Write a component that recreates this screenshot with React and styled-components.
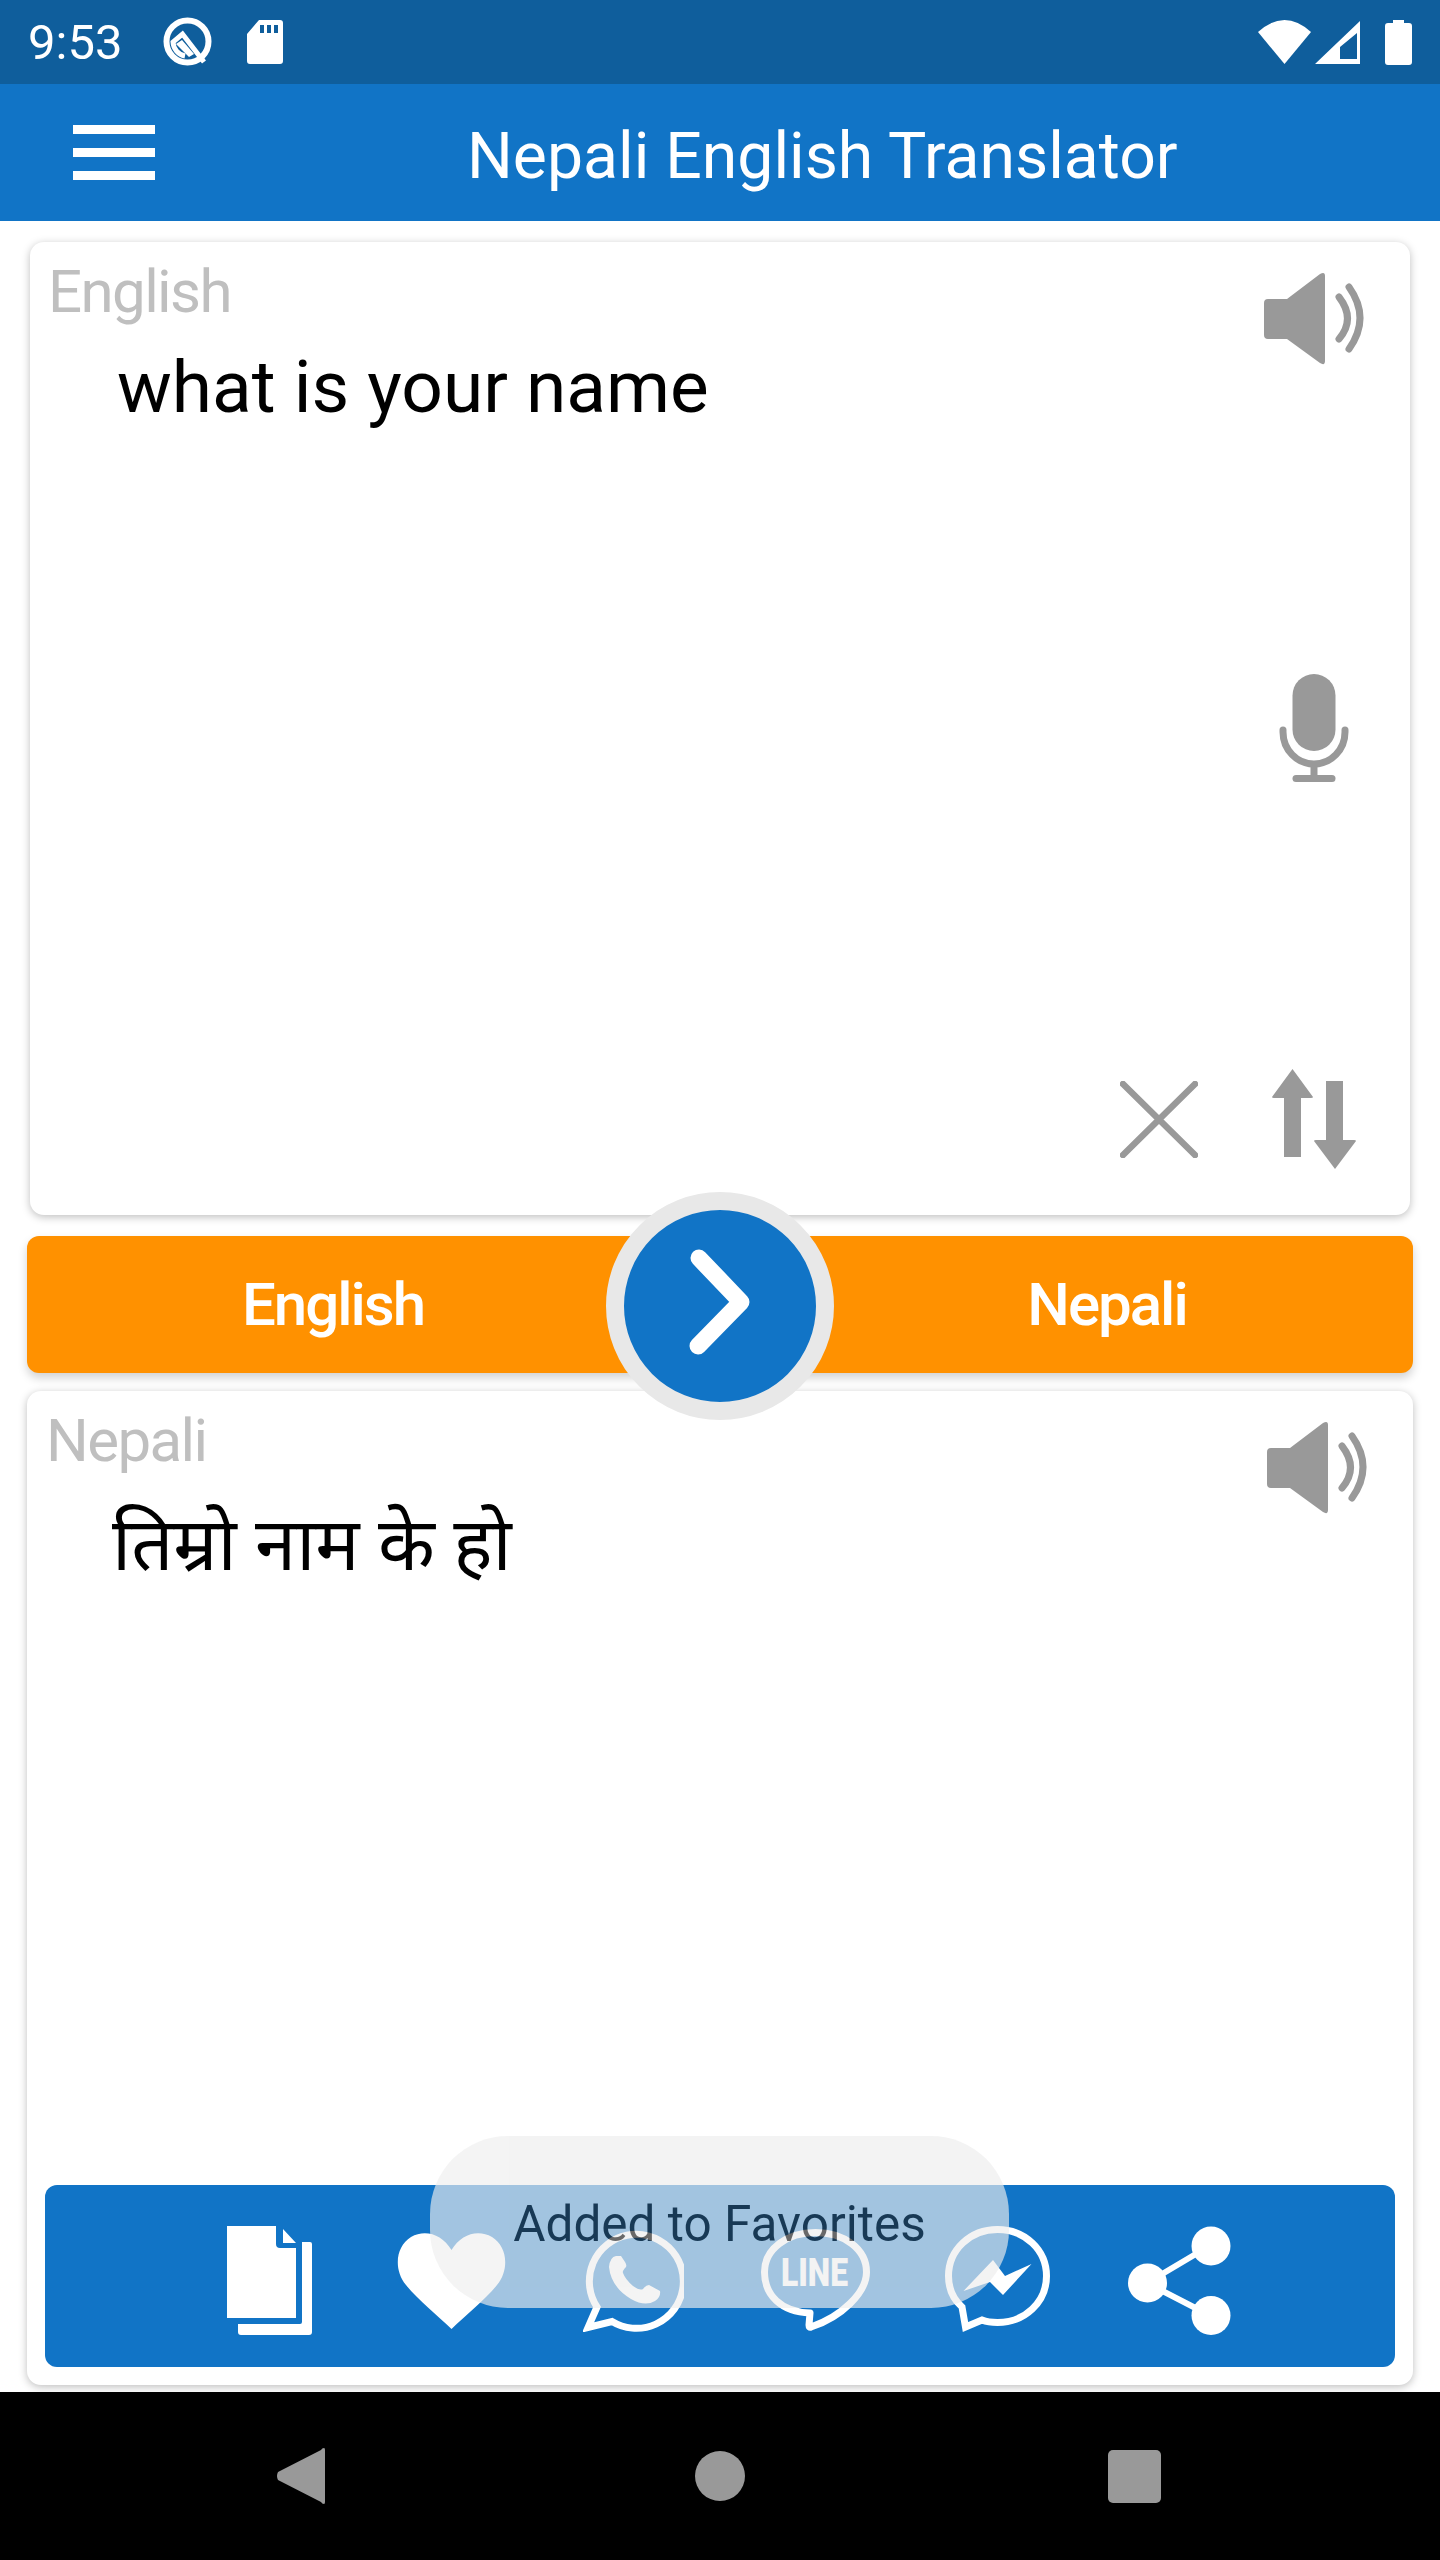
import React from "react";
import styled, { createGlobalStyle } from "styled-components";

const Global = createGlobalStyle`
  html, body { margin: 0; padding: 0; background: #fff; }
  * { box-sizing: border-box; }
`;
const Phone = styled.div`
  width: 1440px; height: 2560px; display: flex; flex-direction: column; overflow: hidden; position: relative;
  font-family: Roboto, "Noto Sans", sans-serif; background: #fff;
`;
const StatusBar = styled.div`
  height: 84px; flex: none; background: #0f5e9c; color: #fff; display: flex; align-items: center;
  padding: 0 28px 0 28px; position: relative;
`;
const Time = styled.span`font-size: 49px; line-height: 84px; width: 135px; padding-top: 2px;`;
const StatusRight = styled.div`margin-left: auto; display: flex; align-items: center;`;
const AppBar = styled.header`
  height: 137px; flex: none; background: #1174c6; display: flex; align-items: center; color: #fff;
`;
const Burger = styled.div`
  width: 82px; height: 55px; margin-left: 73px; display: flex; flex-direction: column; justify-content: space-between;
  i { display: block; height: 9px; background: #fff; }
`;
const Title = styled.h1`
  margin: 0 0 0 312px; padding-top: 8px; font-size: 64.3px; font-weight: 400; white-space: nowrap; line-height: 137px;
`;
const Main = styled.main`flex: 1; min-height: 0; display: flex; flex-direction: column; position: relative;`;
const Card = styled.section`
  background: #fff; border-radius: 14px; box-shadow: 0 2px 9px rgba(0,0,0,.26);
  margin: ${p => p.$margin}; height: ${p => p.$height}px; display: flex; position: relative; z-index: ${p => p.$z || 1};
`;
const TextColumn = styled.div`flex: 1; min-width: 0; padding: ${p => p.$pad};`;
const Label = styled.div`
  font-size: 60px; line-height: 64px; color: #bfbfbf; font-weight: 400; letter-spacing: -1.6px;
`;
const Phrase = styled.div`
  color: #000; font-size: ${p => p.$size}px; line-height: 90px; margin: ${p => p.$margin};
  font-family: Roboto, "Noto Sans Devanagari", "Noto Sans", sans-serif;
`;
const ToolColumn = styled.div`width: 300px; display: flex; flex-direction: column; padding-top: ${p => p.$top}px;`;
const ToolRow = styled.div`
  display: flex; justify-content: flex-end; align-items: center; margin-top: ${p => p.$top || 0}px; padding-right: ${p => p.$right}px;
  gap: ${p => p.$gap || 0}px;
`;
const Svg = styled.svg`display: block; flex: none;`;
const LangBar = styled.div`
  margin: 21px 27px 18px; height: 137px; border-radius: 12px; background: #ff9100; position: relative; z-index: 3;
  box-shadow: 0 5px 10px rgba(0,0,0,.18);
  display: grid; grid-template-columns: 1fr 1fr; column-gap: 162px; align-items: center; text-align: center;
`;
const LangName = styled.div`
  color: #fff; font-size: 60px; font-weight: 500; letter-spacing: -2px; line-height: 137px;
`;
const GoButton = styled.div`
  position: absolute; left: 50%; top: -44px; margin-left: -114px; width: 228px; height: 228px; border-radius: 50%;
  background: #1174c6; border: 18px solid #e8e8e8;
`;
const ActionBar = styled.div`
  position: absolute; left: 18px; right: 18px; bottom: 18px; height: 182px; border-radius: 12px; background: #1174c6;
  display: flex; align-items: center; justify-content: center; padding: 8px 0 0 8px;
`;
const Action = styled.div`width: 182px; display: flex; justify-content: center;`;
const Toast = styled.div`
  position: absolute; left: 430px; top: 2136px; width: 579px; height: 172px; border-radius: 78px; background: #eee; opacity: .66;
  z-index: 6; color: #1c1c1c; font-size: 49.5px; text-align: center; line-height: 56px; padding-top: 60px;
`;
const NavBar = styled.nav`
  height: 168px; flex: none; background: #000; position: relative; z-index: 5;
`;
const NavIcons = styled.div`
  display: flex; align-items: center; height: 100%; padding: 0 0 0 276px;
`;

const Speaker = () => (
  <Svg width="100" height="94" viewBox="0 0 100 94" fill="#999">
    <path d="M4 27H23L56 2Q61-1 61 4V89Q61 94 56 91L23 67H4Q0 67 0 63V31Q0 27 4 27Z" />
    <path d="M75 25Q92 47 75 67M85 15Q107 46 85 77" fill="none" stroke="#999" strokeWidth="7" strokeLinecap="round" />
  </Svg>
);
const Mic = () => (
  <Svg width="70" height="108" viewBox="0 0 70 108" fill="#999">
    <rect x="13.500" width="43" height="77" rx="21.500" />
    <path d="M4 56V58A31 32 0 0 0 66 58V56" fill="none" stroke="#999" strokeWidth="7" strokeLinecap="round" />
    <rect x="31.500" y="88" width="7" height="15" />
    <rect x="13.500" y="101" width="43" height="7" rx="3.500" />
  </Svg>
);
const Close = () => (
  <Svg width="78" height="77" viewBox="0 0 78 77">
    <path d="M3 3L75 74M75 3L3 74" stroke="#999" strokeWidth="6.500" strokeLinecap="round" />
  </Svg>
);
const Swap = () => (
  <Svg width="84" height="100" viewBox="0 0 84 100" fill="#999">
    <path d="M20.500 0L41 28Q41 29 39 29H29V88H12V29H2Q0 29 0 28ZM54 12H71V71H82Q84 71 84 72L63 100L42 72Q42 71 44 71H54Z" />
  </Svg>
);
const Copy = () => (
  <Svg width="85" height="109" viewBox="0 0 85 109" fill="#fff">
    <path d="M0 0H49V18Q49 22 53 22H69V92H0ZM56 3L69 17H56ZM75 16H83Q85 16 85 18V106Q85 109 82 109H14Q11 109 11 106V98H73Q75 98 75 96Z" />
  </Svg>
);
const Heart = () => (
  <Svg width="109" height="97" viewBox="0 0 109 97" fill="#fff">
    <path d="M54.500 97C40 83 20 67 9 53C-4 37-1 14 14 5C28-3 45 2 54.500 18C64 2 81-3 95 5C110 14 113 37 100 53C89 67 69 83 54.500 97Z" />
  </Svg>
);
const Whatsapp = () => (
  <Svg width="101" height="103" viewBox="0 0 101 103" fill="none">
    <path d="M14 78A47 47 0 1 1 29 92.500L5 98.500Z" stroke="#fff" strokeWidth="7" />
    <path d="M33 27Q27 28 26 38Q28 58 48 70Q62 78 72 72Q78 68 77 62L66 56Q63 56 60 60Q57 62 50 57Q42 50 40 44Q39 42 43 38Q44 36 42 33L38 27Z" fill="#fff" />
  </Svg>
);
const LineIcon = () => (
  <Svg width="109" height="102" viewBox="0 0 109 102" fill="none">
    <path d="M49 84C20 83 3.500 66 3.500 43C3.500 20 26 3.500 54.500 3.500C83 3.500 105.500 20 105.500 43C105.500 64 80 88 50 98Q48 99 48 96Z" stroke="#fff" strokeWidth="7" strokeLinejoin="round" />
    <text x="20" y="57" fill="#fff" fontFamily="Roboto, sans-serif" fontWeight="900" fontSize="39" textLength="67" lengthAdjust="spacingAndGlyphs">LINE</text>
  </Svg>
);
const Messenger = () => (
  <Svg width="105" height="108" viewBox="0 0 105 108" fill="none">
    <path d="M17 81C8 73 3.500 63 3.500 50C3.500 24 25 3.500 52.500 3.500C80 3.500 101.500 24 101.500 50C101.500 76 80 96.500 52.500 96.500C47 96.500 42 96 37 94L20.500 101Z" stroke="#fff" strokeWidth="7" />
    <path d="M18.500 65L48 34L60 50L86.500 38L58 69L45 56Z" fill="#fff" />
  </Svg>
);
const Share = () => (
  <Svg width="103" height="109" viewBox="0 0 103 109" fill="#fff">
    <path d="M83 19L19 57L83 90" fill="none" stroke="#fff" strokeWidth="6" />
    <circle cx="83" cy="20" r="19.500" /><circle cx="19.500" cy="57" r="19.500" /><circle cx="83" cy="89.500" r="19.500" />
  </Svg>
);

export default function App() {
  return (
    <Phone>
      <Global />
      <StatusBar>
        <Time>9:53</Time>
        <Svg width="50" height="50" viewBox="0 0 50 50" fill="none">
          <circle cx="24.500" cy="24.500" r="21" stroke="#fff" strokeWidth="6" />
          <path d="M22 39A15 15 0 0 1 10 25L19.500 17L41 45" stroke="#fff" strokeWidth="5" />
          <path d="M19 23L31 37L26 40L13 27Z" fill="#fff" />
        </Svg>
        <Svg width="36" height="44" viewBox="0 0 36 44" style={{ marginLeft: 34 }}>
          <path fillRule="evenodd" fill="#fff" d="M12 0H33Q36 0 36 3V41Q36 44 33 44H3Q0 44 0 41V14ZM13 5V13H17V5ZM20 5V13H24V5ZM27 5V13H31V5Z" />
        </Svg>
        <StatusRight>
          <Svg width="53" height="44" viewBox="0 0 53 44" fill="#fff"><path d="M26.500 44L0 12Q26.500-12 53 12Z" /></Svg>
          <Svg width="45" height="43" viewBox="0 0 45 43" style={{ marginLeft: 4 }}>
            <path fillRule="evenodd" fill="#fff" d="M45 0V43H0ZM25 26V38H42V12Z" />
          </Svg>
          <Svg width="27" height="45" viewBox="0 0 27 45" fill="#fff" style={{ marginLeft: 25 }}>
            <path d="M8 0H19V3H24Q27 3 27 6V42Q27 45 24 45H3Q0 45 0 42V6Q0 3 3 3H8Z" />
          </Svg>
        </StatusRight>
      </StatusBar>
      <AppBar>
        <Burger><i /><i /><i /></Burger>
        <Title>Nepali English Translator</Title>
      </AppBar>
      <Main>
        <Card $margin="21px 30px 0" $height={973}>
          <TextColumn $pad="18px 0 0 18px">
            <Label>English</Label>
            <Phrase $size={73} $margin="18px 0 0 69px">what is your name</Phrase>
          </TextColumn>
          <ToolColumn $top={30}>
            <ToolRow $right={46}><Speaker /></ToolRow>
            <ToolRow $right={61} $top={308}><Mic /></ToolRow>
            <ToolRow $right={54} $top={287} $gap={74}><Close /><Swap /></ToolRow>
          </ToolColumn>
        </Card>
        <LangBar>
          <LangName>English</LangName>
          <LangName>Nepali</LangName>
          <GoButton>
            <Svg width="192" height="192" viewBox="0 0 192 192">
              <path d="M75 48L117 92L74 136" fill="none" stroke="#fff" strokeWidth="17" strokeLinecap="round" strokeLinejoin="round" />
            </Svg>
          </GoButton>
        </LangBar>
        <Card $margin="0 27px" $height={994} $z={2}>
          <TextColumn $pad="18px 0 0 19px">
            <Label>Nepali</Label>
            <Phrase $size={74} $margin="27px 0 0 66px">तिम्रो नाम के हो</Phrase>
          </TextColumn>
          <ToolColumn $top={30}>
            <ToolRow $right={46}><Speaker /></ToolRow>
          </ToolColumn>
          <ActionBar>
            <Action><Copy /></Action>
            <Action><Heart /></Action>
            <Action><Whatsapp /></Action>
            <Action><LineIcon /></Action>
            <Action><Messenger /></Action>
            <Action><Share /></Action>
          </ActionBar>
        </Card>
      </Main>
      <NavBar>
        <NavIcons>
          <Svg width="49" height="56" viewBox="0 0 49 56" fill="#999"><path d="M48 0Q49 0 49 2V54Q49 56 48 56Q46 56 45 54L2 32Q0 28 2 24L45 2Q46 0 48 0Z" /></Svg>
          <Svg width="50" height="50" viewBox="0 0 50 50" fill="#999" style={{ marginLeft: 370 }}><circle cx="25" cy="25" r="25" /></Svg>
          <Svg width="53" height="53" viewBox="0 0 53 53" fill="#999" style={{ marginLeft: 363 }}><rect width="53" height="53" rx="5" /></Svg>
        </NavIcons>
      </NavBar>
      <Toast>Added to Favorites</Toast>
    </Phone>
  );
}
